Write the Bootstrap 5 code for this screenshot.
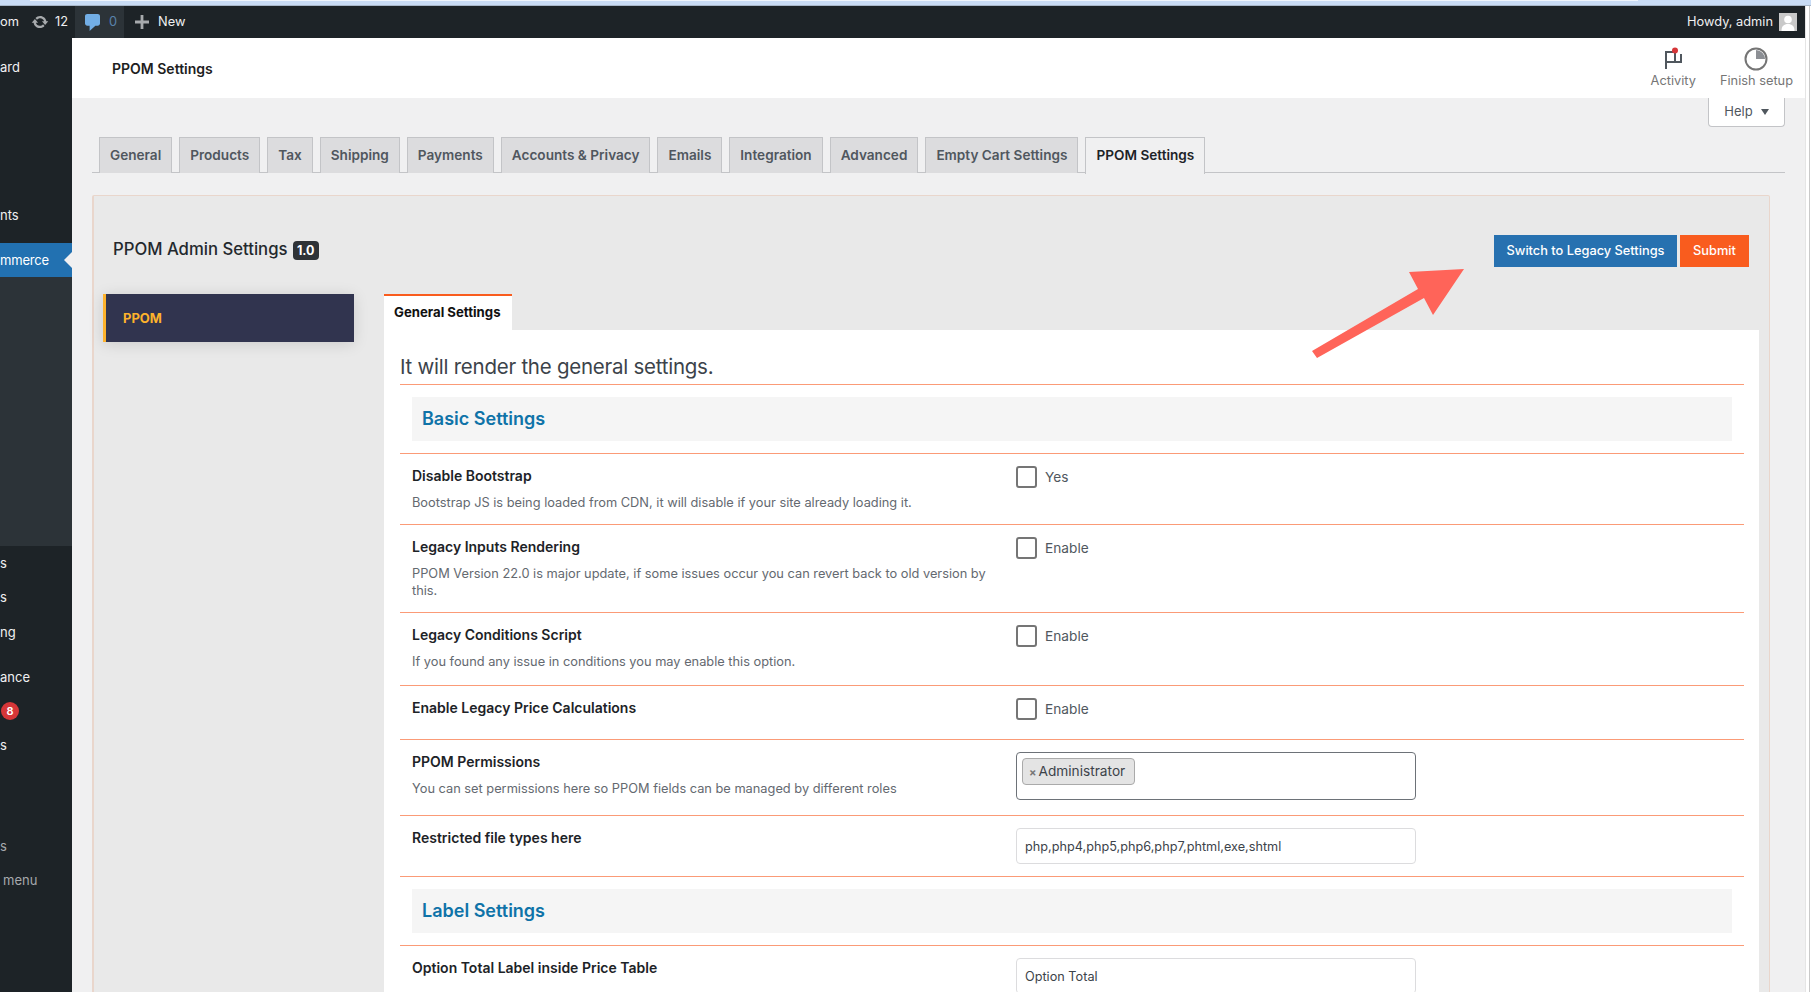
<!DOCTYPE html>
<html lang="en">
<head>
<meta charset="utf-8">
<title>PPOM Settings</title>
<link href="https://cdn.jsdelivr.net/npm/bootstrap@5.3.0/dist/css/bootstrap.min.css" rel="stylesheet">
<style>
html,body{height:992px;overflow:hidden;margin:0;background:#f0f0f1;font-family:Inter,"Liberation Sans",sans-serif;}
.shell{width:1811px;height:992px;overflow:hidden;position:relative;}
.strip{height:6px;background:#c9dcf5;border-bottom:1px solid #a8b7c9;}
.strip-in{height:1px;margin-left:30px;width:1608px;background:#f0f5fc;}
.wpbar{height:32px;background:#1d2327;color:#f0f0f1;font-size:12.8px;line-height:32px;}
.wpbar svg{display:block;}
.bar-om{width:31px;flex:none;overflow:hidden;}
.bar-num{margin-left:6px;margin-right:7px;}
.bar-com{width:49px;height:32px;background:#2c3338;padding-left:10px;flex:none;}
.bar-zero{color:#72aee6;opacity:.65;margin-left:9px;}
.bar-plus{margin-left:11px;margin-right:9px;}
.bar-howdy{margin-right:6px;}
.bar-ava{width:18px;height:18px;background:#c9c9c9;margin-right:8px;}
.body-row{height:954px;}
.adminmenu{width:72px;flex:none;background:#1d2327;color:#f0f0f1;font-size:13px;padding-top:12px;overflow:hidden;}
.mrow{height:34px;line-height:34px;white-space:nowrap;position:relative;}
.mrow-nts{margin-top:114px;}
.mrow-woo{margin-top:11px;background:#2271b1;color:#fff;letter-spacing:-.2px;}
.mrow-woo::after{content:"";position:absolute;right:0;top:9px;border:8px solid transparent;border-right-color:#f0f0f1;}
.mrow-ng{margin-top:1px;}
.mrow-sp1{margin-top:11px;}
.mrow-sp2{margin-top:3px;}
.mrow-back{margin-top:-8px;}
.mrow-sp3{margin-top:67px;color:#a7aaad;}
.mrow-menu{color:#a7aaad;padding-left:3px;}
.mbadge{display:block;width:18px;height:18px;margin:8px 0 0 1px;border-radius:50%;background:#d63638;color:#fff;font-size:11px;font-weight:600;line-height:18px;text-align:center;}
.wsub{height:269px;background:#2c3338;}
.mainpane{flex:1 1 auto;min-width:0;}
.pagehead{height:60px;background:#fff;padding-left:40px;padding-right:12px;}
.pagehead-title{font-size:14px;font-weight:600;color:#1e1e1e;}
.headact{color:#757575;font-size:12.8px;line-height:16px;text-align:center;white-space:nowrap;margin-left:24px;}
.headact svg{display:block;margin:0 auto 2px;}
.helpwrap{height:29px;padding-right:20px;}
.helptab{width:77px;height:29px;background:#fff;border:1px solid #c3c4c7;border-top:0;border-radius:0 0 4px 4px;color:#50575e;font-size:13px;}
.helptri{width:0;height:0;border:4.5px solid transparent;border-top:6px solid #50575e;border-bottom:0;margin-left:8px;}
.tabbar{margin:10px 20px 0 20px;padding-left:7px;height:36px;border-bottom:1px solid #c3c4c7;gap:7px;}
.wctab{height:36px;padding:0 10px;background:#dcdcde;border:1px solid #c3c4c7;border-bottom:0;color:#50575e;font-size:13.6px;font-weight:600;line-height:34px;white-space:nowrap;text-decoration:none;}
.wctab-on{background:#f0f0f1;color:#1d2327;height:37px;}
.panelbox{margin:22px 35px 0 20px;height:800px;background:#e9e9e9;border:1px solid #e9d6cc;border-left-width:2px;border-radius:2px 2px 0 0;padding:39px 10px 0 9px;}
.panelhead{height:32px;padding:0 10px;margin-bottom:27px;}
.paneltitle{font-size:16.7px;font-weight:500;color:#23282d;margin:0;line-height:28px;}
.verbadge{font-size:12.5px;padding:3px 4px;border-radius:4px;background:#2f3337;margin-left:1px;font-weight:700;line-height:13px;}
.actbtn{height:32px;border:0;border-radius:0;font-size:12.8px;font-weight:500;color:#fff;line-height:32px;}
.actbtn-blue{background:#2771b0;width:183px;padding:0;margin-right:3px;}
.actbtn-or{background:#f95c1e;width:69px;padding:0;}
.sidenav{width:251px;flex:none;}
.sideitem{height:48px;background:#31344f;border-left:3px solid #fdb22c;color:#fdb22c;font-size:13px;font-weight:700;line-height:48px;padding-left:17px;box-shadow:0 2px 14px rgba(0,0,0,.13);}
.settings{margin-left:30px;flex:1 1 auto;min-width:0;}
.settab{display:block;width:128px;height:36px;background:#fff;border-top:2px solid #f95c1e;font-size:13.2px;font-weight:700;color:#111;padding-left:10px;line-height:33px;}
.setbody{background:#fff;padding:19px 15px 0 16px;height:700px;}
.sethead{font-size:20.5px;font-weight:400;letter-spacing:-.25px;color:#3c434a;margin:0;line-height:35px;}
.setline{border-top:1px solid #fb9b77;}
.secblock{margin:12px 12px 12px 12px;height:44px;background:#f5f5f5;padding-left:10px;color:#0f73a8;font-size:18px;font-weight:600;line-height:43px;}
.setrow{display:flex;padding:12px 0 0 12px;}
.setlabel{flex:0 0 604px;padding-right:24px;}
.labtxt{font-size:14px;font-weight:600;color:#1d2327;line-height:22px;margin-top:-1px;}
.deschint{font-size:12.8px;color:#646970;line-height:17px;margin-top:7px;}
.chkbox.form-check-input{width:21px;height:22px;margin:0 8px 0 0;border:2px solid #757575;border-radius:3px;background-color:#fff;float:none;}
.chklabel{font-size:13.7px;color:#50575e;}
.permsel{width:400px;height:48px;background:#fff;border:1px solid #6d7278;border-radius:4px;padding:5px;}
.permchip{display:inline-block;height:27px;width:113px;background:#e4e4e4;border:1px solid #aaa;border-radius:4px;font-size:13.7px;line-height:25px;color:#3c434a;padding-left:6px;white-space:nowrap;}
.permx{color:#777;font-weight:700;font-size:11px;margin-right:2px;}
.plaininput.form-control{width:400px;height:36px;border:1px solid #dcdcde;border-radius:4px;font-size:12.7px;color:#3c434a;padding:0 8px;background:#fff;}
.rh71{height:70px;}.rh88{height:87px;}.rh73{height:72px;}.rh53{height:53px;}.rh76{height:75px;}.rh61{height:60px;}
.arrowmark{position:absolute;left:0;top:0;pointer-events:none;}
.sbedge{width:6px;flex:none;background:#fff;border-left:1px solid #e5e5e5;position:relative;}
.sbedge::after{content:"";position:absolute;left:3px;top:0;bottom:0;width:1px;background:#c9c9c9;}
</style>
</head>
<body>
<div class="shell">
  <div class="strip"><div class="strip-in"></div></div>
  <div class="wpbar d-flex align-items-center">
    <span class="bar-om">om</span>
    <svg width="18" height="18" viewBox="0 0 20 20" fill="#a7aaad"><path d="M10.2 3.28c3.53 0 6.43 2.61 6.92 6h2.08l-3.5 4-3.5-4h2.32c-.45-1.97-2.21-3.45-4.32-3.45-1.45 0-2.73.71-3.54 1.78L4.95 5.66C6.23 4.2 8.11 3.28 10.2 3.28zm-.4 13.44c-3.52 0-6.43-2.61-6.92-6H.8l3.5-4c1.17 1.33 2.33 2.67 3.5 4H5.48c.45 1.97 2.21 3.45 4.32 3.45 1.45 0 2.73-.71 3.54-1.78l1.71 1.95c-1.28 1.46-3.15 2.38-5.25 2.38z"/></svg>
    <span class="bar-num">12</span>
    <span class="bar-com d-flex align-items-center">
      <svg width="15" height="17" viewBox="3 2 13 16" preserveAspectRatio="none" fill="#72aee6"><path d="M5 2h9c1.100 0 2 .9 2 2v7c0 1.100-.9 2-2 2h-2l-5 5v-5H5c-1.100 0-2-.9-2-2V4c0-1.100.9-2 2-2z"/></svg>
      <span class="bar-zero">0</span>
    </span>
    <svg class="bar-plus" width="14" height="14" viewBox="0 0 14 14" fill="#a7aaad"><path d="M5.600 0h2.800v5.600H14v2.800H8.400V14H5.600V8.400H0V5.600h5.600z"/></svg>
    <span>New</span>
    <span class="bar-howdy ms-auto">Howdy, admin</span>
    <span class="bar-ava d-block"><svg width="18" height="18" viewBox="0 0 18 18" fill="#fff"><circle cx="9" cy="6.500" r="3.800"/><path d="M2.500 18c0-5 2.500-7 6.500-7s6.500 2 6.500 7z"/></svg></span>
    <span class="sbedge align-self-stretch"></span>
  </div>
  <div class="body-row d-flex">
    <div class="adminmenu">
      <div class="mrow">ard</div>
      <div class="mrow mrow-nts">nts</div>
      <div class="mrow mrow-woo">mmerce</div>
      <div class="wsub"></div>
      <div class="mrow">s</div>
      <div class="mrow">s</div>
      <div class="mrow mrow-ng">ng</div>
      <div class="mrow mrow-sp1">ance</div>
      <div class="mrow mrow-sp2"><span class="mbadge">8</span></div>
      <div class="mrow mrow-back">s</div>
      <div class="mrow mrow-sp3">s</div>
      <div class="mrow mrow-menu">menu</div>
    </div>
    <div class="mainpane">
      <div class="pagehead d-flex align-items-center">
        <span class="pagehead-title">PPOM Settings</span>
        <div class="headact ms-auto">
          <svg width="24" height="24" viewBox="0 0 24 24" fill="none" stroke="#50575e" stroke-width="2"><path d="M5 22V5h9v10H5M14 15h6V7"/><circle cx="14" cy="3.500" r="3" fill="#d63638" stroke="none"/></svg>
          Activity
        </div>
        <div class="headact">
          <svg width="24" height="24" viewBox="0 0 24 24" fill="none"><circle cx="12" cy="12" r="10.500" stroke="#757575" stroke-width="2"/><path d="M12 3a9 9 0 0 1 9 9h-9z" fill="#8c8f94"/></svg>
          Finish setup
        </div>
      </div>
      <div class="helpwrap d-flex justify-content-end">
        <div class="helptab d-flex align-items-center justify-content-center">Help<span class="helptri"></span></div>
      </div>
      <nav class="tabbar nav flex-nowrap">
        <a class="wctab" href="#">General</a>
        <a class="wctab" href="#">Products</a>
        <a class="wctab" href="#">Tax</a>
        <a class="wctab" href="#">Shipping</a>
        <a class="wctab" href="#">Payments</a>
        <a class="wctab" href="#">Accounts &amp; Privacy</a>
        <a class="wctab" href="#">Emails</a>
        <a class="wctab" href="#">Integration</a>
        <a class="wctab" href="#">Advanced</a>
        <a class="wctab" href="#">Empty Cart Settings</a>
        <a class="wctab wctab-on" href="#">PPOM Settings</a>
      </nav>
      <div class="panelbox">
        <div class="panelhead d-flex align-items-start">
          <h2 class="paneltitle">PPOM Admin Settings <span class="badge verbadge">1.0</span></h2>
          <button class="btn actbtn actbtn-blue ms-auto" type="button">Switch to Legacy Settings</button>
          <button class="btn actbtn actbtn-or" type="button">Submit</button>
        </div>
        <div class="d-flex">
          <div class="sidenav"><div class="sideitem">PPOM</div></div>
          <div class="settings">
            <span class="settab">General Settings</span>
            <div class="setbody">
              <h3 class="sethead">It will render the general settings.</h3>
              <div class="setline"></div>
              <div class="secblock">Basic Settings</div>
              <div class="setline"></div>
              <div class="setrow rh71">
                <div class="setlabel"><div class="labtxt">Disable Bootstrap</div><div class="deschint">Bootstrap JS is being loaded from CDN, it will disable if your site already loading it.</div></div>
                <div class="d-flex align-items-center align-self-start"><input class="form-check-input chkbox" type="checkbox"><span class="chklabel">Yes</span></div>
              </div>
              <div class="setline"></div>
              <div class="setrow rh88">
                <div class="setlabel"><div class="labtxt">Legacy Inputs Rendering</div><div class="deschint">PPOM Version 22.0 is major update, if some issues occur you can revert back to old version by this.</div></div>
                <div class="d-flex align-items-center align-self-start"><input class="form-check-input chkbox" type="checkbox"><span class="chklabel">Enable</span></div>
              </div>
              <div class="setline"></div>
              <div class="setrow rh73">
                <div class="setlabel"><div class="labtxt">Legacy Conditions Script</div><div class="deschint">If you found any issue in conditions you may enable this option.</div></div>
                <div class="d-flex align-items-center align-self-start"><input class="form-check-input chkbox" type="checkbox"><span class="chklabel">Enable</span></div>
              </div>
              <div class="setline"></div>
              <div class="setrow rh53">
                <div class="setlabel"><div class="labtxt">Enable Legacy Price Calculations</div></div>
                <div class="d-flex align-items-center align-self-start"><input class="form-check-input chkbox" type="checkbox"><span class="chklabel">Enable</span></div>
              </div>
              <div class="setline"></div>
              <div class="setrow rh76">
                <div class="setlabel"><div class="labtxt">PPOM Permissions</div><div class="deschint">You can set permissions here so PPOM fields can be managed by different roles</div></div>
                <div class="permsel"><span class="permchip"><span class="permx">×</span>Administrator</span></div>
              </div>
              <div class="setline"></div>
              <div class="setrow rh61">
                <div class="setlabel"><div class="labtxt">Restricted file types here</div></div>
                <input class="form-control plaininput" type="text" value="php,php4,php5,php6,php7,phtml,exe,shtml">
              </div>
              <div class="setline"></div>
              <div class="secblock">Label Settings</div>
              <div class="setline"></div>
              <div class="setrow rh61">
                <div class="setlabel"><div class="labtxt">Option Total Label inside Price Table</div></div>
                <input class="form-control plaininput" type="text" value="Option Total">
              </div>
            </div>
          </div>
        </div>
      </div>
    </div>
    <div class="sbedge"></div>
  </div>
  <svg class="arrowmark" width="1811" height="992" viewBox="0 0 1811 992"><polygon fill="#ff6459" points="1312,351 1317,358 1424,298 1433,315 1464,269 1409,272 1418,289"/></svg>
</div>
<script src="https://cdn.jsdelivr.net/npm/bootstrap@5.3.0/dist/js/bootstrap.bundle.min.js"></script>
</body>
</html>
